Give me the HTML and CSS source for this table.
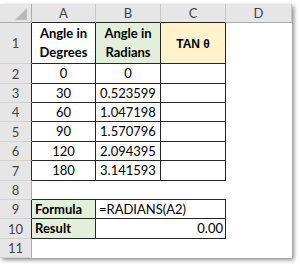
FILE: index.html
```html
<!DOCTYPE html>
<html>
<head>
<meta charset="utf-8">
<link rel="stylesheet" href="styles.css">
</head>
<body>
<div class="page">
  <div class="sheet">
    <div class="hd corner"><span class="tri"></span></div>
    <div class="hd col top">A</div>
    <div class="hd col top">B</div>
    <div class="hd col top">C</div>
    <div class="hd col">D</div>

    <div class="rh in">1</div>
    <div class="c tb wrap">Angle in<br>Degrees</div>
    <div class="c tb wrap green">Angle in<br>Radians</div>
    <div class="c tb tan yellow">TAN θ</div>
    <div class="c"></div>

    <div class="rh in">2</div>
    <div class="c tb">0</div>
    <div class="c tb">0</div>
    <div class="c tb"></div>
    <div class="c"></div>

    <div class="rh in">3</div>
    <div class="c tb">30</div>
    <div class="c tb">0.523599</div>
    <div class="c tb"></div>
    <div class="c"></div>

    <div class="rh in">4</div>
    <div class="c tb">60</div>
    <div class="c tb">1.047198</div>
    <div class="c tb"></div>
    <div class="c"></div>

    <div class="rh in">5</div>
    <div class="c tb">90</div>
    <div class="c tb">1.570796</div>
    <div class="c tb"></div>
    <div class="c"></div>

    <div class="rh in">6</div>
    <div class="c tb">120</div>
    <div class="c tb">2.094395</div>
    <div class="c tb"></div>
    <div class="c"></div>

    <div class="rh in">7</div>
    <div class="c tb">180</div>
    <div class="c tb">3.141593</div>
    <div class="c tb"></div>
    <div class="c"></div>

    <div class="rh">8</div>
    <div class="c above"></div>
    <div class="c above"></div>
    <div class="c above"></div>
    <div class="c"></div>

    <div class="rh in">9</div>
    <div class="c tb green bold left">Formula</div>
    <div class="c tb span2 left">=RADIANS(A2)</div>
    <div class="c"></div>

    <div class="rh in">10</div>
    <div class="c tb green bold left">Result</div>
    <div class="c tb span2 right">0.00</div>
    <div class="c"></div>

    <div class="rh last">11</div>
    <div class="c"></div>
    <div class="c"></div>
    <div class="c"></div>
    <div class="c"></div>
  </div>
</div>
</body>
</html>
```
FILE: styles.css
```css
html, body {
  margin: 0;
  padding: 0;
  background: #ffffff;
}
.page {
  padding-top: 4px;
  width: 300px;
  height: 267px;
  box-sizing: border-box;
}
.sheet {
  display: grid;
  grid-template-columns: 32px 64px 65px 65px 66px;
  grid-template-rows: 19px 41px 20px 19px 19px 20px 19px 20px 19px 19px 20px 19px;
  width: 292px;
  background: #ffffff;
  box-shadow: 2px 2px 4px rgba(0, 0, 0, 0.45);
  font-family: Lato, "Liberation Sans", sans-serif;
  font-size: 13px;
  color: #000000;
}
.hd {
  background: #e6e6e6;
  border-right: 1px solid #c8c8c8;
  border-bottom: 1px solid #ababab;
  box-sizing: border-box;
  display: flex;
  align-items: center;
  justify-content: center;
  color: #444444;
  font-size: 13px;
}
.hd.top {
  border-bottom-color: #262626;
}
.hd:last-child {
  border-right: none;
}
.corner {
  justify-content: flex-end;
  align-items: flex-end;
  padding: 0 4px 2px 0;
  border-right-color: #ababab;
}
.tri {
  width: 12px;
  height: 12px;
  background: #b9b9b9;
  clip-path: polygon(100% 0, 100% 100%, 0 100%);
}
.rh {
  background: #e6e6e6;
  border-right: 1px solid #ababab;
  border-bottom: 1px solid #d2d2d2;
  box-sizing: border-box;
  display: flex;
  align-items: center;
  justify-content: center;
  color: #444444;
}
.rh.in {
  border-right-color: #262626;
}
.c {
  box-sizing: border-box;
  display: flex;
  align-items: center;
  justify-content: center;
  white-space: nowrap;
  line-height: 19px;
}
.tb {
  border-right: 1px solid #262626;
  border-bottom: 1px solid #262626;
}
.above {
  border-bottom: 1px solid #262626;
}
.wrap {
  font-weight: 700;
  text-align: center;
  align-items: flex-end;
  padding-bottom: 1px;
}
.tan {
  font-family: "Liberation Sans", Arial, sans-serif;
  font-weight: 700;
  font-size: 12px;
  padding-top: 2px;
}
.green {
  background: #e2efda;
}
.yellow {
  background: #fff2cc;
}
.bold {
  font-weight: 700;
}
.left {
  justify-content: flex-start;
  padding-left: 3px;
}
.right {
  justify-content: flex-end;
  padding-right: 2px;
}
.span2 {
  grid-column: span 2;
}
```
